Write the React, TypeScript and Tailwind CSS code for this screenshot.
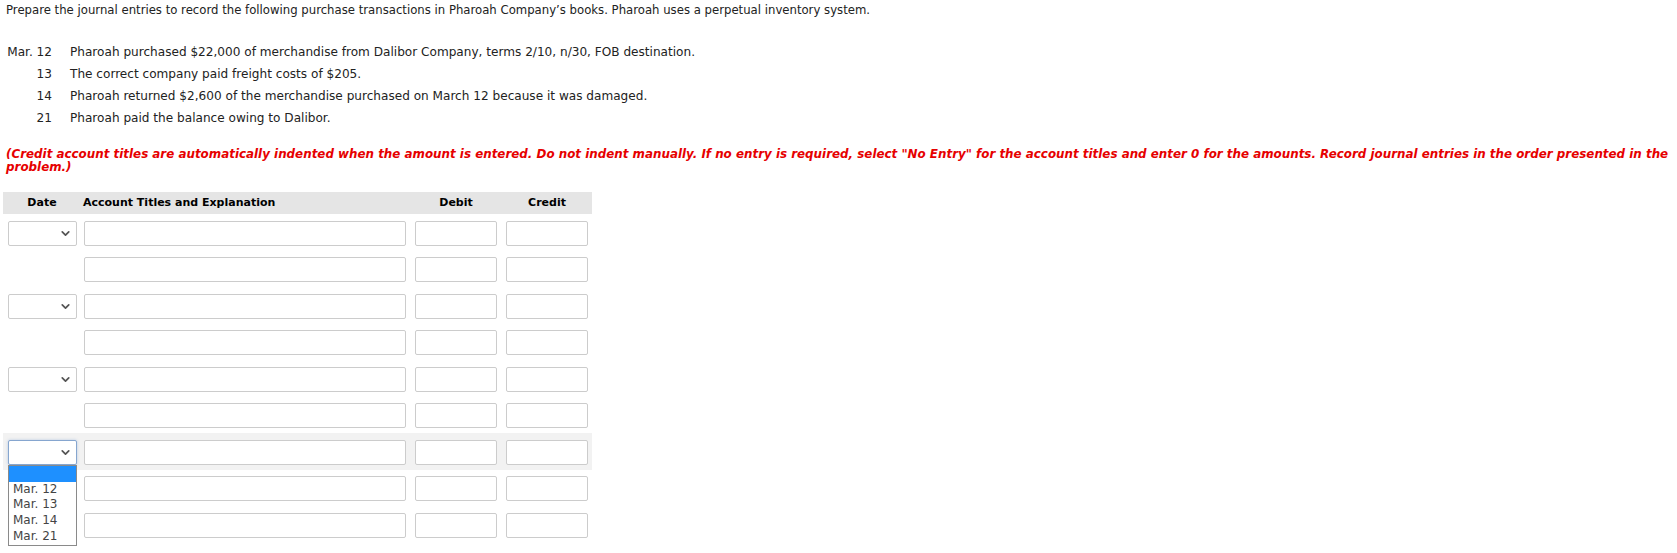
import { ChevronDown } from "lucide-react";

const transactions = [
  { date: "Mar. 12", text: "Pharoah purchased $22,000 of merchandise from Dalibor Company, terms 2/10, n/30, FOB destination." },
  { date: "13", text: "The correct company paid freight costs of $205." },
  { date: "14", text: "Pharoah returned $2,600 of the merchandise purchased on March 12 because it was damaged." },
  { date: "21", text: "Pharoah paid the balance owing to Dalibor." },
];

const dateOptions = ["Mar. 12", "Mar. 13", "Mar. 14", "Mar. 21"];

// 9 lines: a date select starts each entry
const rows = [true, false, true, false, true, false, true, false, false];
const focusedRow = 6;

function DateSelect({ focused }: { focused?: boolean }) {
  return (
    <div className="relative ml-[5px] w-[69px]">
      <div
        className={
          focused
            ? "flex h-[25px] items-center justify-end rounded-[2px] border border-[#86a6cf] bg-white pr-[4px] shadow-[0_0_3px_rgba(80,130,200,0.35)]"
            : "flex h-[25px] items-center justify-end rounded-[2px] border border-[#cccccc] bg-white pr-[4px]"
        }
      >
        <ChevronDown className="h-[13px] w-[13px] text-[#555]" strokeWidth={3.2} />
      </div>
      {focused && (
        <div className="absolute left-0 top-[25px] z-10 w-[69px] border border-[#8a8a8a] bg-white text-[12px] leading-[15.8px] text-[#444]">
          <div className="h-[16px] bg-[#1e90ff]" />
          {dateOptions.map((d) => (
            <div key={d} className="whitespace-nowrap pl-[4px]">
              {d}
            </div>
          ))}
        </div>
      )}
    </div>
  );
}

function Field({ w }: { w: string }) {
  return <div className={`h-[25px] rounded-[2px] border border-[#cccccc] bg-white ${w}`} />;
}

export default function App() {
  return (
    <div className="min-h-[553px] bg-white pt-[2px] text-[#222] [font-family:'DejaVu_Sans',Verdana,sans-serif]">
      <p className="px-[6px] text-[11.7px] leading-[16px]">
        Prepare the journal entries to record the following purchase transactions in Pharoah Company’s books. Pharoah uses a perpetual inventory system.
      </p>

      {/* Transactions */}
      <div className="mt-[23px] flex flex-col px-[7px] text-[12.1px] leading-[22px]">
        {transactions.map((t) => (
          <div key={t.text} className="flex whitespace-nowrap">
            <div className="w-[45px] text-right">{t.date}</div>
            <div className="ml-[18px]">{t.text}</div>
          </div>
        ))}
      </div>

      <p className="mt-[19px] pl-[6px] text-[11.9px] font-bold italic leading-[12.5px] text-[#e60000]">
        (Credit account titles are automatically indented when the amount is entered. Do not indent manually. If no entry is required, select "No Entry" for the account titles and enter 0 for the amounts. Record journal entries in the order presented in the problem.)
      </p>

      {/* Journal table */}
      <div className="ml-[3px] mt-[19px] w-[589px]">
        <div className="flex h-[22px] items-center bg-[#e5e5e5] text-[11px] font-bold text-black">
          <div className="w-[78px] text-center">Date</div>
          <div className="ml-[2px]">Account Titles and Explanation</div>
          <div className="ml-auto w-[82px] text-center">Debit</div>
          <div className="ml-[9px] mr-[4px] w-[82px] text-center">Credit</div>
        </div>
        {rows.map((hasDate, i) => (
          <div
            key={i}
            className={[
              "flex items-center",
              i % 2 === 0 ? "h-[37px] pt-[1px]" : "h-[36px]",
              i === focusedRow ? "bg-[#f2f2f2]" : "",
            ].join(" ")}
          >
            {hasDate ? <DateSelect focused={i === focusedRow} /> : <div className="ml-[5px] w-[69px]" />}
            <div className="ml-[7px]">
              <Field w="w-[322px]" />
            </div>
            <div className="ml-[9px]">
              <Field w="w-[82px]" />
            </div>
            <div className="ml-[9px]">
              <Field w="w-[82px]" />
            </div>
          </div>
        ))}
      </div>
    </div>
  );
}
